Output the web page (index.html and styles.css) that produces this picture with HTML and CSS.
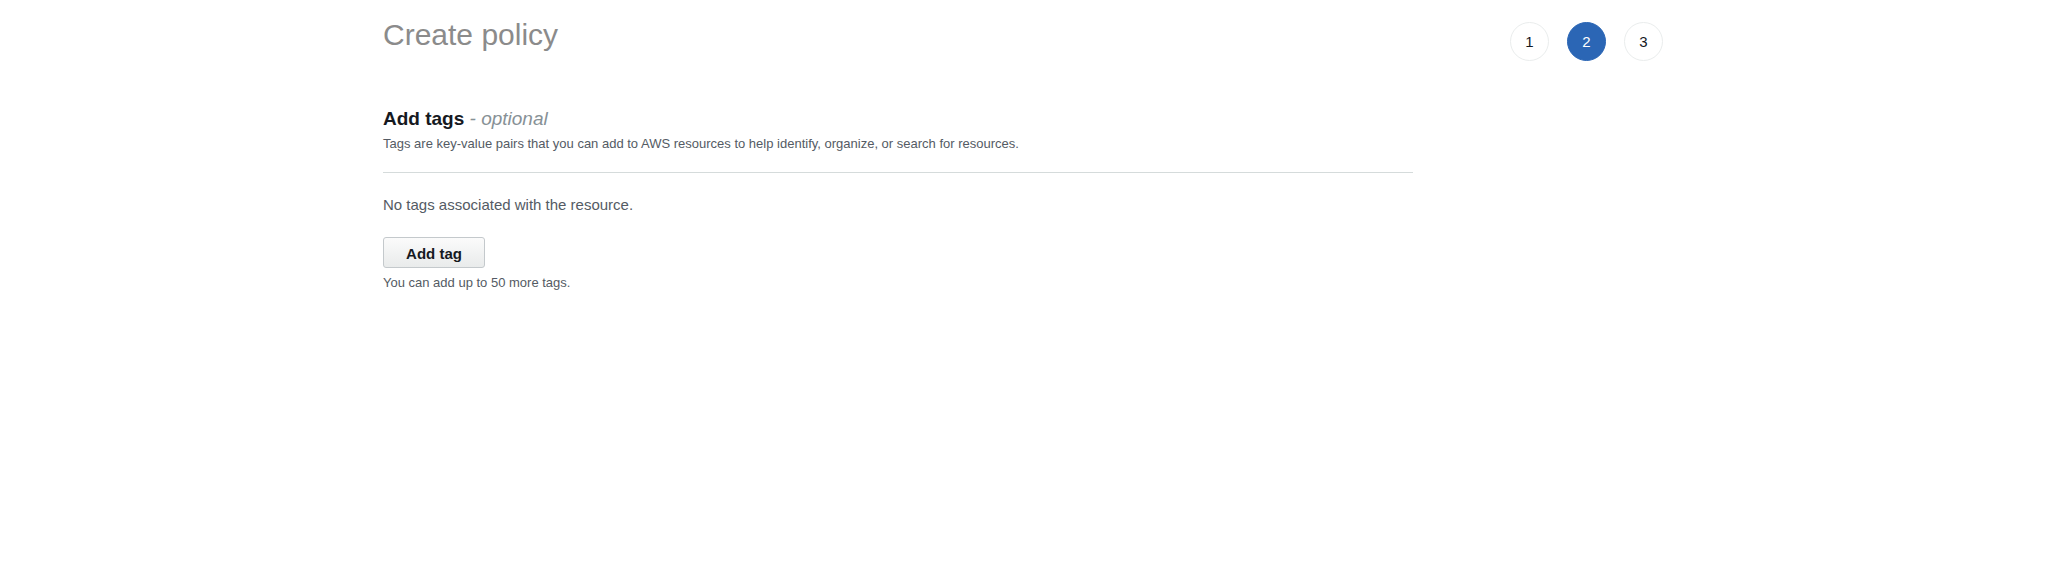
FILE: index.html
```html
<!DOCTYPE html>
<html lang="en">
<head>
    <meta charset="UTF-8">
    <meta name="viewport" content="width=device-width, initial-scale=1.0">
    <title>Create policy</title>
    <link rel="stylesheet" href="styles.css">
</head>
<body>
    <div class="page">
        <header class="page-head">
            <h1>Create policy</h1>
            <ol class="steps">
                <li>1</li>
                <li class="active">2</li>
                <li>3</li>
            </ol>
        </header>
        <section class="tags">
            <div class="tags-head">
                <h2>Add tags <em>- optional</em></h2>
                <p>Tags are key-value pairs that you can add to AWS resources to help identify, organize, or search for resources.</p>
            </div>
            <p class="empty">No tags associated with the resource.</p>
            <button class="btn">Add tag</button>
            <p class="hint">You can add up to 50 more tags.</p>
        </section>
    </div>
</body>
</html>
```

FILE: styles.css
```css
body { margin: 0; font-family: "Liberation Sans", Arial, sans-serif; color: #16191f; background: #fff; }
.page { width: 1282px; margin: 0 auto; }
.page-head { display: flex; justify-content: space-between; align-items: flex-start; padding-top: 17px; }
.page-head h1 { margin: 0; font-size: 30px; line-height: 36px; font-weight: normal; color: #8b8b8b; }
.steps { display: flex; gap: 18px; list-style: none; margin: 5px 2px 0 0; padding: 0; }
.steps li { width: 37px; height: 37px; border: 1px solid #eaeded; border-radius: 50%; display: flex; align-items: center; justify-content: center; font-size: 15px; color: #16191f; }
.steps li.active { background: #2b66b5; border-color: #2b66b5; color: #fff; }
.tags { width: 1030px; margin-top: 46px; }
.tags-head { border-bottom: 1px solid #d5dbdb; padding-bottom: 19px; }
.tags-head h2 { margin: 0; font-size: 19px; line-height: 24px; font-weight: bold; }
.tags-head h2 em { font-weight: normal; color: #879196; }
.tags-head p { margin: 4px 0 0; font-size: 13px; line-height: 18px; color: #545b64; }
.empty { margin: 22px 0 0; font-size: 15px; line-height: 20px; color: #545b64; }
.btn { display: block; margin-top: 22px; width: 102px; height: 31px; padding: 1px 0 0; border: 1px solid #c4c9cc; border-radius: 3px; background: linear-gradient(#fbfbfb, #e9ebeb); font-family: inherit; font-size: 15px; font-weight: bold; color: #16191f; cursor: pointer; }
.hint { margin: 7px 0 0; font-size: 13px; line-height: 16px; color: #545b64; }
```
